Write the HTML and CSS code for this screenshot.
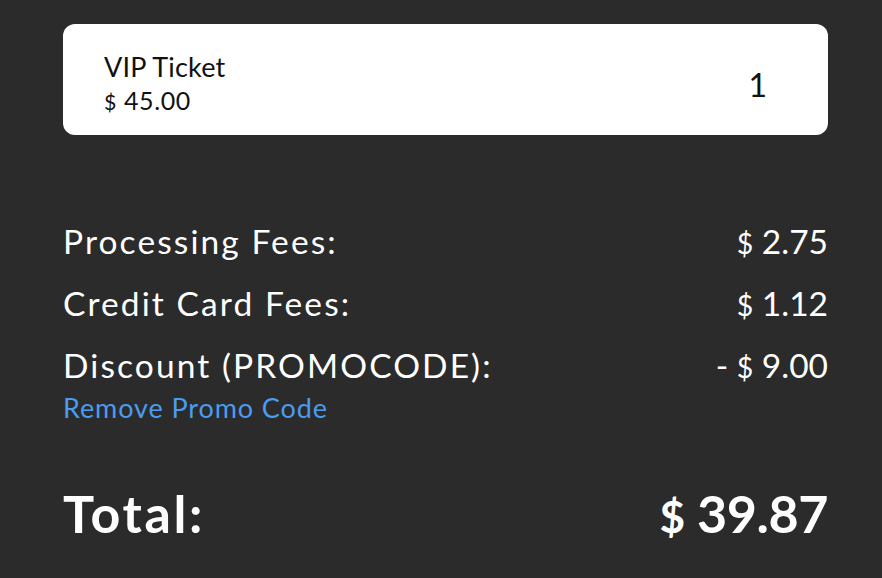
FILE: index.html
```html
<!DOCTYPE html>
<html>
<head>
<meta charset="utf-8">
<link rel="stylesheet" href="styles.css">
</head>
<body>
<div class="page">
  <div class="ticket">
    <div class="ticket-info">
      <div class="ticket-name">VIP Ticket</div>
      <div class="ticket-price"><span class="cur">$</span> 45.00</div>
    </div>
    <div class="ticket-qty">1</div>
  </div>

  <div class="fees">
    <div class="row"><span class="label">Processing Fees:</span><span><span class="cur">$</span> 2.75</span></div>
    <div class="row"><span class="label">Credit Card Fees:</span><span><span class="cur">$</span> 1.12</span></div>
    <div class="row"><span class="label">Discount (PROMOCODE):</span><span>- <span class="cur">$</span> 9.00</span></div>
    <a class="remove" href="#">Remove Promo Code</a>
  </div>

  <div class="total"><span class="total-label">Total:</span><span class="total-amount"><span class="cur">$</span> 39.87</span></div>
</div>
</body>
</html>
```
FILE: styles.css
```css
html, body {
  margin: 0;
  padding: 0;
  background: #2b2b2b;
}
body {
  font-family: Lato, "Noto Sans", sans-serif;
  color: #ffffff;
}
.page {
  padding: 24px 54px 0 63px;
  display: flex;
  flex-direction: column;
}
.ticket {
  background: #ffffff;
  color: #111111;
  border-radius: 12px;
  height: 111px;
  display: flex;
  align-items: center;
  justify-content: space-between;
  padding: 0 61px 0 41px;
  box-sizing: border-box;
}
.ticket-info {
  margin-top: 8px;
}
.ticket-name {
  font-size: 27px;
  line-height: 34px;
  letter-spacing: 0.2px;
}
.ticket-price {
  font-size: 25px;
  line-height: 32px;
  letter-spacing: 0.6px;
}
.ticket-qty {
  font-size: 32px;
  margin-top: 10px;
}
.cur {
  font-size: 0.85em;
}
.fees {
  margin-top: 75px;
  display: flex;
  flex-direction: column;
}
.row {
  display: flex;
  justify-content: space-between;
  font-size: 33.5px;
  line-height: 62px;
  height: 62px;
}
.label {
  letter-spacing: 2.1px;
}
.remove {
  color: #4a9cf0;
  text-decoration: none;
  font-size: 27px;
  line-height: 28px;
  letter-spacing: 0.9px;
  margin-top: -2px;
}
.total {
  margin-top: 60px;
  display: flex;
  justify-content: space-between;
  font-size: 52px;
  font-weight: 700;
}
.total-label {
  letter-spacing: 2.6px;
}
.total-amount {
  letter-spacing: -0.4px;
}
```
